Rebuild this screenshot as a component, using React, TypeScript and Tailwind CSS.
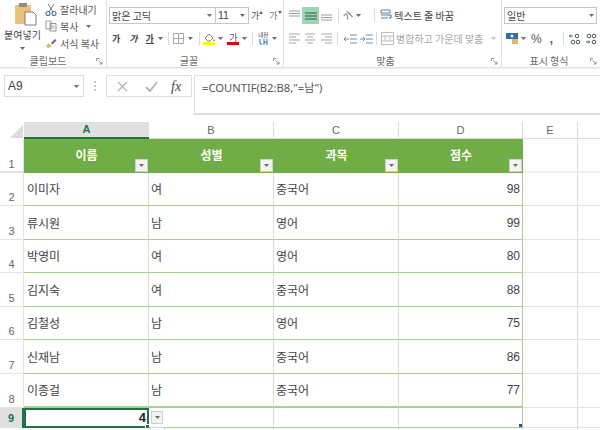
const kr = "font-['Noto_Sans_CJK_KR','Noto_Sans',sans-serif]";
const num = "font-['Liberation_Sans',sans-serif]";

const rows = [
  { no: 2, h: "h-[33px]", line: "border-b", name: "이미자", sex: "여", subject: "중국어", score: 98 },
  { no: 3, h: "h-[34px]", line: "border-b", name: "류시원", sex: "남", subject: "영어", score: 99 },
  { no: 4, h: "h-[33px]", line: "border-b", name: "박영미", sex: "여", subject: "영어", score: 80 },
  { no: 5, h: "h-[34px]", line: "border-b", name: "김지숙", sex: "여", subject: "중국어", score: 88 },
  { no: 6, h: "h-[33px]", line: "border-b", name: "김철성", sex: "남", subject: "영어", score: 75 },
  { no: 7, h: "h-[34px]", line: "border-b", name: "신재남", sex: "남", subject: "중국어", score: 86 },
  { no: 8, h: "h-[34px]", line: "border-b-2", name: "이종걸", sex: "남", subject: "중국어", score: 77 },
];

function Caret({ className = "" }: { className?: string }) {
  return (
    <svg width="5" height="3" viewBox="0 0 5 3" className={className}>
      <path d="M0 0h5L2.5 3z" fill="#6b6b6b" />
    </svg>
  );
}

function Launcher() {
  return (
    <svg width="7" height="7" viewBox="0 0 7 7" className="absolute right-[3px] bottom-[2px]">
      <path d="M0.5 3V0.5H3M2.5 2.5L6 6M6 3.5V6H3.5" fill="none" stroke="#8a8a8a" strokeWidth="0.9" />
    </svg>
  );
}

function Lines({ align }: { align: "left" | "center" | "right" }) {
  const d =
    align === "center"
      ? "M2 2h10M4 5h6M2 8h10M4 11h6"
      : align === "left"
        ? "M1 2h11M1 5h7M1 8h11M1 11h7"
        : "M2 2h11M6 5h7M2 8h11M6 11h7";
  return (
    <svg width="14" height="13" viewBox="0 0 14 13">
      <path d={d} stroke="#a4a4a4" strokeWidth="1" fill="none" />
    </svg>
  );
}

function VAlign({ d }: { d: string }) {
  return (
    <svg width="14" height="13" viewBox="0 0 14 13">
      <path d={d} stroke="#9b9b9b" strokeWidth="1" fill="none" />
    </svg>
  );
}

function Filter() {
  return (
    <div className="absolute right-[1px] bottom-[1px] w-[13px] h-[13px] bg-[#f3f3f3] border border-[#d0d0d0] flex items-center justify-center">
      <Caret />
    </div>
  );
}

function Ribbon() {
  return (
    <div className={`flex h-[68px] bg-white border-b border-[#e3e3e3] ${kr}`}>
      {/* clipboard */}
      <div className="relative w-[107px] shrink-0 border-r border-[#e2e2e2] flex">
        <div className="w-[45px] flex flex-col items-center">
          <svg width="24" height="24" viewBox="0 0 24 24" className="mt-[2px] ml-[6px]">
            <rect x="1" y="3" width="16" height="19" rx="1" fill="#e9c27e" />
            <rect x="5" y="1" width="8" height="4" fill="#8d8d8d" />
            <path d="M11 10h8l3 3v10H11z" fill="#fff" stroke="#7f7f7f" strokeWidth="1" />
          </svg>
          <span className="text-[10px] leading-[12px] text-[#444] mt-[3px] whitespace-nowrap">붙여넣기</span>
          <Caret className="mt-[6px]" />
        </div>
        <div className="flex flex-col gap-[1px] pt-[1px] text-[10px] leading-[15px] text-[#555]">
          <div className="flex items-center gap-[3px] h-[16px]">
            <svg width="12" height="13" viewBox="0 0 12 13">
              <path d="M3 1l5 8M9 1L4 9" stroke="#7b7b7b" strokeWidth="1" fill="none" />
              <circle cx="3" cy="10.5" r="2" fill="none" stroke="#2f6fae" strokeWidth="1.1" />
              <circle cx="9" cy="10.5" r="2" fill="none" stroke="#2f6fae" strokeWidth="1.1" />
            </svg>
            <span>잘라내기</span>
          </div>
          <div className="flex items-center gap-[3px] h-[16px]">
            <svg width="12" height="12" viewBox="0 0 12 12">
              <path d="M1 1h5v8H1zM5 3.5h6V11H5z" fill="#fff" stroke="#8a8a8a" strokeWidth="0.9" />
              <path d="M6.5 6h3M6.5 8h3" stroke="#5b8fc4" strokeWidth="0.8" />
            </svg>
            <span>복사</span>
            <Caret className="ml-[5px]" />
          </div>
          <div className="flex items-center gap-[3px] h-[16px]">
            <svg width="12" height="11" viewBox="0 0 12 11">
              <path d="M6 5l4-4 1.5 1.5-4 4z" fill="#6d6d6d" />
              <path d="M1 9l2-4 4 3-3 2z" fill="#e5b765" />
            </svg>
            <span>서식 복사</span>
          </div>
        </div>
        <div className="absolute left-0 right-0 top-[55px] text-center text-[10px] leading-[12px] text-[#6b6b6b] pr-[10px]">클립보드</div>
        <Launcher />
      </div>

      {/* font */}
      <div className="relative w-[177px] shrink-0 border-r border-[#e2e2e2] pl-[2px]">
        <div className="flex items-center mt-[7px] h-[17px]">
          <div className="w-[107px] h-[17px] border border-[#c6c6c6] flex items-center justify-between pl-[2px] pr-[3px] text-[10px] text-[#444]">
            <span>맑은 고딕</span>
            <Caret />
          </div>
          <div className={`w-[33px] h-[17px] border border-l-0 border-[#c6c6c6] flex items-center justify-between pl-[2px] pr-[3px] text-[10.5px] text-[#444] ${num}`}>
            <span>11</span>
            <Caret />
          </div>
          <span className="ml-[2px] text-[9px] text-[#555]">가</span>
          <svg width="4" height="3" viewBox="0 0 4 3" className="mb-[6px]">
            <path d="M0 3l2-3 2 3z" fill="#2f6fae" />
          </svg>
          <span className="ml-[6px] text-[9px] text-[#777]">가</span>
          <svg width="4" height="3" viewBox="0 0 4 3" className="mb-[6px]">
            <path d="M0 0h4L2 3z" fill="#2f6fae" />
          </svg>
        </div>
        <div className="flex items-center h-[17px] mt-[6px] pl-[3px] text-[9px] font-bold text-[#444]">
          <span>가</span>
          <span className="ml-[9px] italic">가</span>
          <span className="ml-[8px] underline">가</span>
          <Caret className="ml-[4px]" />
          <div className="w-px h-[13px] bg-[#dcdcdc] ml-[5px]" />
          <svg width="11" height="11" viewBox="0 0 11 11" className="ml-[4px]">
            <path d="M0.5 0.5h10v10h-10zM5.5 0.5v10M0.5 5.5h10" fill="none" stroke="#a8a8a8" strokeWidth="1" />
          </svg>
          <Caret className="ml-[4px]" />
          <div className="w-px h-[13px] bg-[#dcdcdc] ml-[6px]" />
          <div className="ml-[3px] flex flex-col items-center w-[13px]">
            <svg width="11" height="9" viewBox="0 0 11 9">
              <path d="M1 5l4-4 4 4-3 3H4z" fill="#fff" stroke="#777" strokeWidth="0.9" />
              <path d="M10 6l1 2H9z" fill="#4f81bd" />
            </svg>
            <div className="w-[12px] h-[3px] bg-[#ffff00]" />
          </div>
          <Caret className="ml-[2px]" />
          <div className="ml-[4px] flex flex-col items-center w-[13px]">
            <span className="text-[9px] leading-[9px] font-normal text-[#555]">가</span>
            <div className="w-[12px] h-[3px] bg-[#e8000f]" />
          </div>
          <Caret className="ml-[2px]" />
          <div className="w-px h-[13px] bg-[#dcdcdc] ml-[5px]" />
          <div className="ml-[5px] flex flex-col items-center w-[11px]">
            <span className="whitespace-nowrap text-[5.5px] leading-[7px] font-normal">내천</span>
            <svg width="9" height="6" viewBox="0 0 9 6">
              <path d="M1 0v5h2M5 0v6M8 0v6M5 3h3" fill="none" stroke="#2f6fae" strokeWidth="1" />
            </svg>
          </div>
          <Caret className="ml-[3px]" />
        </div>
        <div className="absolute left-0 right-0 top-[55px] text-center text-[10px] leading-[12px] text-[#6b6b6b] pr-[12px]">글꼴</div>
        <Launcher />
      </div>

      {/* alignment */}
      <div className="relative w-[218px] shrink-0 border-r border-[#e2e2e2] pl-[4px]">
        <div className="flex items-center mt-[7px] h-[17px]">
          <VAlign d="M1 2h11M1 4.5h11M1 7h11" />
          <div className="w-[17px] h-[17px] bg-[#9fd5b7] flex items-center justify-center">
            <svg width="12" height="10" viewBox="0 0 12 10">
              <path d="M0 2h12M0 5h12M0 8h12" stroke="#5b7f6c" strokeWidth="1.3" />
            </svg>
          </div>
          <div className="ml-[2px]">
            <VAlign d="M0 6h11M0 8.5h11M0 11h11" />
          </div>
          <div className="w-px h-[15px] bg-[#dcdcdc] ml-[3px]" />
          <span className="ml-[5px] text-[9px] text-[#555] -rotate-45">가</span>
          <Caret className="ml-[4px]" />
          <div className="w-px h-[15px] bg-[#dcdcdc] ml-[13px]" />
          <svg width="13" height="13" viewBox="0 0 13 13" className="ml-[5px]">
            <path d="M1 1h9v3H1zM1 6h7M1 9h7" fill="none" stroke="#5b7f9f" strokeWidth="1" />
            <path d="M8 6h3v3H9" fill="none" stroke="#2f6fae" strokeWidth="1" />
          </svg>
          <span className="ml-[1px] text-[10px] text-[#444] whitespace-nowrap">텍스트 줄 바꿈</span>
        </div>
        <div className="flex items-center h-[17px] mt-[6px]">
          <Lines align="left" />
          <div className="ml-[1px]"><Lines align="center" /></div>
          <div className="ml-[2px]"><Lines align="right" /></div>
          <div className="w-px h-[13px] bg-[#dcdcdc] ml-[4px]" />
          <svg width="13" height="10" viewBox="0 0 13 10" className="ml-[6px]">
            <path d="M6 1h7M6 5h7M6 9h7M5 5H0M2 3L0 5l2 2" fill="none" stroke="#5f8fbc" strokeWidth="1" />
          </svg>
          <svg width="13" height="10" viewBox="0 0 13 10" className="ml-[3px]">
            <path d="M6 1h7M6 5h7M6 9h7M0 5h5M3 3l2 2-2 2" fill="none" stroke="#5f8fbc" strokeWidth="1" />
          </svg>
          <div className="w-px h-[13px] bg-[#dcdcdc] ml-[3px]" />
          <svg width="13" height="13" viewBox="0 0 13 13" className="ml-[4px]">
            <path d="M0.5 0.5h12v12h-12zM0.5 4h12M0.5 9h12M4 4v5M9 4v5" fill="none" stroke="#bdbdbd" strokeWidth="1" />
          </svg>
          <span className="ml-[2px] text-[10px] text-[#a8a8a8] whitespace-nowrap">병합하고 가운데 맞춤</span>
          <Caret className="ml-[8px] opacity-40" />
        </div>
        <div className="absolute left-0 right-0 top-[55px] text-center text-[10px] leading-[12px] text-[#6b6b6b] pr-[14px]">맞춤</div>
        <Launcher />
      </div>

      {/* number */}
      <div className="relative flex-1 min-w-0 pl-[2px]">
        <div className="mt-[7px] w-[93px] h-[17px] border border-[#c6c6c6] flex items-center justify-between pl-[2px] pr-[2px] text-[10px] text-[#444]">
          <span>일반</span>
          <Caret />
        </div>
        <div className={`flex items-center h-[17px] mt-[6px] pl-[2px] text-[#555] ${num}`}>
          <svg width="13" height="13" viewBox="0 0 13 13">
            <rect x="0" y="1" width="12" height="6" fill="#2f6fae" />
            <circle cx="6" cy="4" r="1.5" fill="#fff" />
            <rect x="6" y="7" width="6" height="5" fill="#e5b765" />
          </svg>
          <Caret className="ml-[2px]" />
          <span className="ml-[5px] text-[12px] leading-none">%</span>
          <span className="ml-[8px] text-[12px] font-bold leading-none">,</span>
          <div className="w-px h-[13px] bg-[#dcdcdc] ml-[10px]" />
          <svg width="12" height="12" viewBox="0 0 12 12" className="ml-[5px]">
            <path d="M0 3h4M2 1.5L0.5 3 2 4.5" stroke="#2f6fae" fill="none" />
            <circle cx="8" cy="3" r="1.8" fill="none" stroke="#555" />
            <circle cx="4" cy="9" r="1.8" fill="none" stroke="#555" />
            <circle cx="9" cy="9" r="1.8" fill="none" stroke="#555" />
          </svg>
          <svg width="12" height="12" viewBox="0 0 12 12" className="ml-[4px]">
            <circle cx="4" cy="3" r="1.8" fill="none" stroke="#555" />
            <circle cx="9" cy="3" r="1.8" fill="none" stroke="#555" />
            <path d="M1 9h4M3 7.5L4.5 9 3 10.5" stroke="#2f6fae" fill="none" />
            <circle cx="9" cy="9" r="1.8" fill="none" stroke="#555" />
          </svg>
        </div>
        <div className="absolute left-0 right-0 top-[55px] text-center text-[10px] leading-[12px] text-[#6b6b6b] pr-[4px]">표시 형식</div>
        <Launcher />
      </div>
    </div>
  );
}

function FormulaBar() {
  return (
    <div className="flex h-[46px] pt-[6px] bg-white">
      <div className="w-[80px] ml-[4px] h-[22px] border border-[#dedede] flex items-center justify-between pl-[3px] pr-[4px]">
        <span className={`text-[12px] text-[#444] ${num}`}>A9</span>
        <Caret />
      </div>
      <div className="w-[22px] flex flex-col items-center justify-center gap-[2px] h-[22px]">
        <div className="w-[2px] h-[2px] bg-[#c4c4c4]" />
        <div className="w-[2px] h-[2px] bg-[#c4c4c4]" />
        <div className="w-[2px] h-[2px] bg-[#c4c4c4]" />
      </div>
      <div className="w-[86px] h-[22px] border border-[#dedede] flex items-center pl-[10px]">
        <svg width="11" height="11" viewBox="0 0 11 11">
          <path d="M1 1l9 9M10 1l-9 9" stroke="#b4b4b4" strokeWidth="1.2" fill="none" />
        </svg>
        <svg width="13" height="11" viewBox="0 0 13 11" className="ml-[17px]">
          <path d="M1 6l4 4 7-9" stroke="#b4b4b4" strokeWidth="1.8" fill="none" />
        </svg>
        <span className="ml-[13px] font-['Liberation_Serif',serif] italic text-[14px] text-[#444]">fx</span>
      </div>
      <div className="flex-1 ml-[2px] border border-r-0 border-b-2 border-[#dedede] h-[40px] pl-[7px] pt-[3px] text-[11.2px] leading-[16px] text-[#555] font-['Noto_Sans',sans-serif]">
        =COUNTIF(B2:B8,"=<span className={kr}>남</span>")
      </div>
    </div>
  );
}

function Sheet() {
  const colLine = "border-r border-r-[#dcdcdc]";
  const green = "border-b-[#a9d08e]";
  return (
    <div className={`relative text-[12px] text-[#444] ${kr}`}>
      {/* column headers */}
      <div className={`flex h-[17px] text-[11px] text-[#666] ${num}`}>
        <div className="w-[24px] bg-white relative overflow-hidden">
          <svg width="13" height="13" viewBox="0 0 13 13" className="absolute right-[1px] bottom-[1px]">
            <path d="M13 0v13H0z" fill="#dcdcdc" />
          </svg>
        </div>
        <div className="w-[125px] bg-[#e0e0e0] border-b-2 border-b-[#217346] text-[#217346] font-bold flex items-center justify-center">A</div>
        <div className={`w-[125px] flex items-center justify-center border-b border-b-[#dcdcdc] ${colLine}`}>B</div>
        <div className={`w-[125px] flex items-center justify-center border-b border-b-[#dcdcdc] ${colLine}`}>C</div>
        <div className={`w-[124px] flex items-center justify-center border-b border-b-[#dcdcdc] ${colLine}`}>D</div>
        <div className={`w-[55px] flex items-center justify-center border-b border-b-[#dcdcdc] ${colLine}`}>E</div>
        <div className="flex-1 border-b border-b-[#dcdcdc]" />
      </div>

      {/* row 1 */}
      <div className="flex h-[34px]">
        <div className={`w-[24px] border-r border-b-2 border-[#e2e2e2] text-[11px] leading-[12px] text-[#666] flex items-end justify-center pb-[1px] ${num}`}>1</div>
        {[
          ["이름", "w-[125px]"],
          ["성별", "w-[125px]"],
          ["과목", "w-[125px]"],
          ["점수", "w-[124px]"],
        ].map(([label, w]) => (
          <div key={label} className={`relative ${w} bg-[#70ad47] text-white font-bold flex justify-center pt-[8px] text-[12px] leading-[16px]`}>
            {label}
            <Filter />
          </div>
        ))}
        <div className={`w-[55px] border-b-2 border-b-[#eeeeee] ${colLine}`} />
        <div className="flex-1 border-b-2 border-b-[#eeeeee]" />
      </div>

      {/* data rows */}
      {rows.map((r) => (
        <div key={r.no} className={`flex ${r.h}`}>
          <div className={`w-[24px] border-r border-b border-[#e2e2e2] text-[11px] leading-[12px] text-[#666] flex items-end justify-center pb-[2px] ${num}`}>{r.no}</div>
          <div className={`w-[125px] ${r.line} ${green} ${colLine} flex items-center pl-[3px]`}>{r.name}</div>
          <div className={`w-[125px] ${r.line} ${green} ${colLine} flex items-center pl-[2px]`}>{r.sex}</div>
          <div className={`w-[125px] ${r.line} ${green} ${colLine} flex items-center pl-[2px]`}>{r.subject}</div>
          <div className={`w-[124px] ${r.line} ${green} border-r border-r-[#a9d08e] flex items-center justify-end pr-[2px] ${num}`}>{r.score}</div>
          <div className={`w-[55px] border-b border-b-[#e2e2e2] ${colLine}`} />
          <div className="flex-1 border-b border-b-[#e2e2e2]" />
        </div>
      ))}

      {/* total row */}
      <div className="flex h-[20px]">
        <div className={`w-[24px] bg-[#e0e0e0] border-r-2 border-r-[#217346] text-[11px] font-bold text-[#217346] flex items-center justify-center ${num}`}>9</div>
        <div className={`relative w-[125px] border-2 border-[#217346] flex items-center justify-end pr-[1px] font-bold text-[13px] text-[#222] ${num}`}>
          4
          <div className="absolute -right-[3px] -bottom-[3px] w-[5px] h-[5px] bg-[#217346] border border-white" />
        </div>
        <div className={`relative w-[125px] border-b ${green} ${colLine}`}>
          <div className="absolute left-[2px] top-[3px] w-[12px] h-[13px] bg-[#f3f3f3] border border-[#cfcfcf] flex items-center justify-center">
            <Caret />
          </div>
          <div className="absolute left-[1px] top-[19px] w-[15px] h-[6px] bg-white border border-[#d8d8d8]" />
        </div>
        <div className={`w-[125px] border-b ${green} ${colLine}`} />
        <div className={`relative w-[124px] border-b ${green} border-r border-r-[#a9d08e]`}>
          <div className="absolute right-0 bottom-0 w-[3px] h-[3px] bg-[#2f4fa8]" />
        </div>
        <div className={`w-[55px] border-b border-b-[#e2e2e2] ${colLine}`} />
        <div className="flex-1 border-b border-b-[#e2e2e2]" />
      </div>
      <div className="flex h-[3px]">
        <div className="w-[24px] border-r border-[#e2e2e2]" />
        <div className={`w-[125px] ${colLine}`} />
        <div className={`w-[125px] ${colLine}`} />
        <div className={`w-[125px] ${colLine}`} />
        <div className={`w-[124px] ${colLine}`} />
        <div className={`w-[55px] ${colLine}`} />
      </div>
    </div>
  );
}

export default function App() {
  return (
    <div className="w-[600px] h-[430px] overflow-hidden bg-white">
      <Ribbon />
      <div className="h-[1px] bg-[#f0f0f0]" />
      <FormulaBar />
      <div className="h-[7px] bg-white" />
      <Sheet />
    </div>
  );
}
